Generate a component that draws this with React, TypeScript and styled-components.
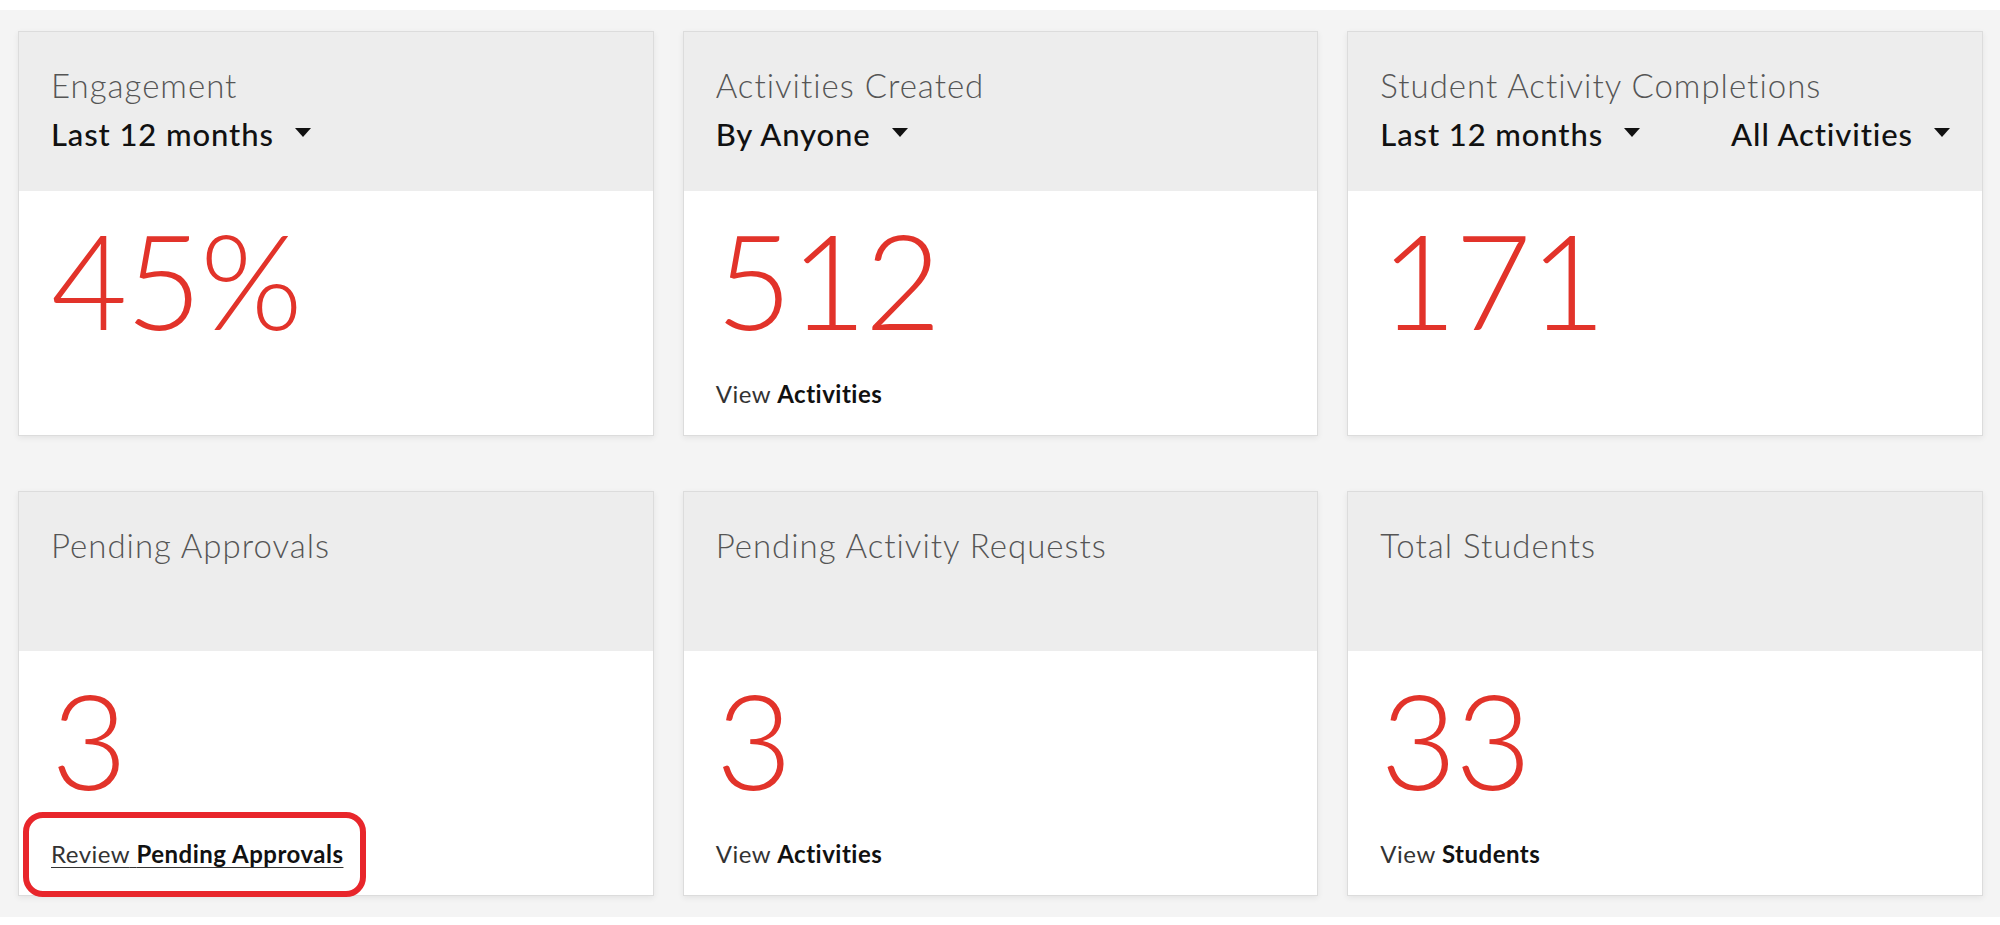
import React from "react";
import styled, { createGlobalStyle } from "styled-components";

const GlobalStyle = createGlobalStyle`
  html, body {
    margin: 0;
    padding: 0;
    background: #ffffff;
  }
  body {
    font-family: "Lato", "Open Sans", sans-serif;
    -webkit-font-smoothing: antialiased;
  }
  * { box-sizing: border-box; }
`;

const Page = styled.div`
  padding: 10px 0 8px;
`;

const Board = styled.div`
  background: #f4f4f4;
  padding: 21px 17px 21px 18px;
  display: grid;
  grid-template-columns: repeat(3, 1fr);
  column-gap: 29px;
  row-gap: 55px;
`;

const Card = styled.section`
  position: relative;
  height: 405px;
  background: #ffffff;
  border: 1px solid #dcdcdc;
  box-shadow: 0 2px 6px rgba(0, 0, 0, 0.07);
  display: flex;
  flex-direction: column;
`;

const Header = styled.div`
  height: 159px;
  background: #ededed;
  padding: 37px 32px 0 32px;
  display: flex;
  flex-direction: column;
  gap: 17px;
`;

const Title = styled.h2`
  margin: 0;
  font-size: 33px;
  line-height: 1;
  font-weight: 300;
  color: #555555;
  letter-spacing: 1px;
`;

const Filters = styled.div`
  display: flex;
  justify-content: space-between;
  align-items: center;
`;

const Dropdown = styled.button`
  border: 0;
  padding: 0;
  background: transparent;
  display: inline-flex;
  align-items: center;
  gap: 21px;
  font-family: inherit;
  font-size: 31px;
  line-height: 1;
  font-weight: 500;
  color: #111111;
  letter-spacing: 0.9px;
  cursor: pointer;
`;

const Caret = styled.svg`
  width: 16px;
  height: 9px;
  flex: none;
  margin-top: -4px;
`;

const Body = styled.div`
  flex: 1;
  padding: 22px 34px 29px 32px;
  display: flex;
  flex-direction: column;
`;

const Metric = styled.div`
  font-size: 132px;
  line-height: 1;
  font-weight: 300;
  color: #e2332a;
  letter-spacing: -2px;
`;

const LinkLine = styled.a<{ $underline?: boolean }>`
  margin-top: auto;
  align-self: flex-start;
  font-size: 24px;
  line-height: 1;
  color: #333333;
  letter-spacing: 0.5px;
  text-decoration: ${(p) => (p.$underline ? "underline" : "none")};
  text-underline-offset: 4px;
  text-decoration-thickness: 1px;
  cursor: pointer;
`;

const Strong = styled.b`
  font-weight: 700;
  color: #111111;
`;

const Highlight = styled.div`
  position: absolute;
  left: 4px;
  bottom: -2px;
  width: 343px;
  height: 85px;
  border: 6px solid #e8262b;
  border-radius: 20px;
  pointer-events: none;
`;

const CaretIcon = () => (
  <Caret viewBox="0 0 16 9" aria-hidden="true">
    <path d="M0 0 H16 L8 9 Z" fill="#111" />
  </Caret>
);

type CardData = {
  title: string;
  filters?: string[];
  value: string;
  link?: { lead: string; strong: string };
  highlight?: boolean;
};

const cards: CardData[] = [
  { title: "Engagement", filters: ["Last 12 months"], value: "45%" },
  {
    title: "Activities Created",
    filters: ["By Anyone"],
    value: "512",
    link: { lead: "View", strong: "Activities" },
  },
  {
    title: "Student Activity Completions",
    filters: ["Last 12 months", "All Activities"],
    value: "171",
  },
  {
    title: "Pending Approvals",
    value: "3",
    link: { lead: "Review", strong: "Pending Approvals" },
    highlight: true,
  },
  {
    title: "Pending Activity Requests",
    value: "3",
    link: { lead: "View", strong: "Activities" },
  },
  {
    title: "Total Students",
    value: "33",
    link: { lead: "View", strong: "Students" },
  },
];

export default function App() {
  return (
    <>
      <GlobalStyle />
      <Page>
        <Board>
          {cards.map((c) => (
            <Card key={c.title}>
              <Header>
                <Title>{c.title}</Title>
                {c.filters && (
                  <Filters>
                    {c.filters.map((f) => (
                      <Dropdown key={f} type="button">
                        {f}
                        <CaretIcon />
                      </Dropdown>
                    ))}
                  </Filters>
                )}
              </Header>
              <Body>
                <Metric>{c.value}</Metric>
                {c.link && (
                  <LinkLine $underline={c.highlight}>
                    {c.link.lead} <Strong>{c.link.strong}</Strong>
                  </LinkLine>
                )}
              </Body>
              {c.highlight && <Highlight />}
            </Card>
          ))}
        </Board>
      </Page>
    </>
  );
}
